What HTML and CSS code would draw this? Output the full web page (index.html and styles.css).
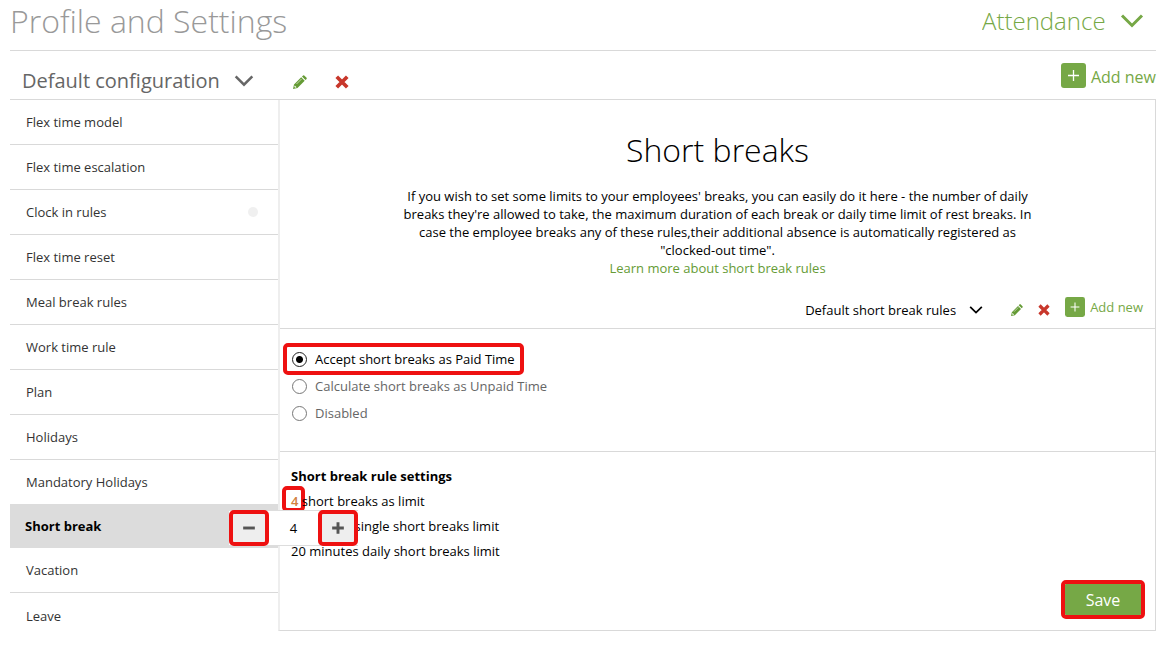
FILE: index.html
```html
<!DOCTYPE html>
<html lang="en">
<head>
  <meta charset="UTF-8">
  <meta name="viewport" content="width=device-width, initial-scale=1.0">
  <title>Profile and Settings</title>
  <link rel="stylesheet" href="styles.css">
</head>
<body>

  <!-- shared icons -->
  <svg class="sprite" aria-hidden="true">
    <symbol id="chevron" viewBox="0 0 24 16">
      <path d="M2 2.5 L12 12.5 L22 2.5" fill="none" stroke="currentColor" stroke-width="3"/>
    </symbol>
    <symbol id="pencil" viewBox="0 0 14 14">
      <path d="M0 14 L1 9.5 L8.200 2.300 L11.700 5.800 L4.500 13 Z M9 1.500 L10.100 .4 Q10.600 0 11.200 .4 L13.600 2.800 Q14 3.300 13.600 3.900 L12.500 5 Z" fill="currentColor"/>
      <path d="M1.700 10.400 L3.600 12.300 L2.200 12.700 L1.300 11.800 Z" fill="#fff"/>
      <path d="M3.500 9 L8.500 4" fill="none" stroke="#fff" stroke-width=".6"/>
    </symbol>
    <symbol id="cross" viewBox="0 0 12 12">
      <path d="M1.500 1.500 L10.500 10.500 M10.500 1.500 L1.500 10.500" stroke="currentColor" stroke-width="3.200"/>
    </symbol>
    <symbol id="add" viewBox="0 0 25 25">
      <rect width="25" height="25" rx="3" fill="currentColor"/>
      <path d="M12.500 7 V18 M7 12.500 H18" stroke="#fff" stroke-width="1.300"/>
    </symbol>
  </svg>

  <!-- Header -->
  <header class="page-header">
    <h1>Profile and Settings</h1>
    <div class="dropdown module">
      <select aria-label="Module">
        <option>Attendance</option>
      </select>
      <svg><use href="#chevron"/></svg>
    </div>
  </header>

  <!-- Configuration bar -->
  <div class="config-bar">
    <div class="dropdown config">
      <select aria-label="Configuration">
        <option>Default configuration</option>
      </select>
      <svg><use href="#chevron"/></svg>
    </div>
    <button type="button" class="icon edit" aria-label="Edit configuration"><svg><use href="#pencil"/></svg></button>
    <button type="button" class="icon delete" aria-label="Delete configuration"><svg><use href="#cross"/></svg></button>
    <button type="button" class="add-new"><svg><use href="#add"/></svg><span>Add new</span></button>
  </div>

  <div class="layout">
    <!-- Side menu -->
    <nav class="menu">
      <a href="#">Flex time model</a>
      <a href="#">Flex time escalation</a>
      <a href="#">Clock in rules <span class="dot"></span></a>
      <a href="#">Flex time reset</a>
      <a href="#">Meal break rules</a>
      <a href="#">Work time rule</a>
      <a href="#">Plan</a>
      <a href="#">Holidays</a>
      <a href="#">Mandatory Holidays</a>
      <a href="#" class="active">Short break</a>
      <a href="#">Vacation</a>
      <a href="#">Leave</a>
    </nav>

    <!-- Content -->
    <main class="content">
      <section class="intro">
        <h2>Short breaks</h2>
        <p>If you wish to set some limits to your employees' breaks, you can easily do it here - the number of daily breaks they're allowed to take, the maximum duration of each break or daily time limit of rest breaks. In case the employee breaks any of these rules,their additional absence is automatically registered as "clocked-out time".<br>
        <a href="#">Learn more about short break rules</a></p>
      </section>

      <div class="rules-bar">
        <div class="dropdown rules">
          <select aria-label="Short break rules">
            <option>Default short break rules</option>
          </select>
          <svg><use href="#chevron"/></svg>
        </div>
        <button type="button" class="icon edit" aria-label="Edit rules"><svg><use href="#pencil"/></svg></button>
        <button type="button" class="icon delete" aria-label="Delete rules"><svg><use href="#cross"/></svg></button>
        <button type="button" class="add-new"><svg><use href="#add"/></svg><span>Add new</span></button>
      </div>

      <form>
        <div class="options">
          <label class="marked"><input type="radio" name="mode" checked>Accept short breaks as Paid Time</label>
          <label><input type="radio" name="mode">Calculate short breaks as Unpaid Time</label>
          <label><input type="radio" name="mode">Disabled</label>
        </div>

        <div class="settings">
          <h3>Short break rule settings</h3>
          <div class="limit">
            <a href="#" class="value marked">4</a> short breaks as limit
            <div class="stepper">
              <button type="button" class="marked" aria-label="Less"><svg viewBox="0 0 12 12"><path d="M1 6 H11"/></svg></button>
              <input type="text" value="4" aria-label="Short breaks limit">
              <button type="button" class="marked" aria-label="More"><svg viewBox="0 0 12 12"><path d="M1 6 H11 M6 1 V11"/></svg></button>
            </div>
          </div>
          <div>5 minutes single short breaks limit</div>
          <div>20 minutes daily short breaks limit</div>
        </div>

        <div class="actions">
          <button type="submit" class="save marked">Save</button>
        </div>
      </form>
    </main>
  </div>

</body>
</html>
```
FILE: styles.css
```css
* {
  box-sizing: border-box;
}

body {
  margin: 0;
  padding: 0 11px 16px 10px;
  font-family: 'Open Sans', 'Noto Sans', sans-serif;
  font-size: 13px;
  line-height: 18px;
  color: #000;
  background: #fff;
}

h1, h2, h3, p {
  margin: 0;
}

a {
  color: #659b35;
  text-decoration: none;
}

button, input, select {
  font: inherit;
  color: inherit;
}

button {
  padding: 0;
  border: none;
  background: none;
  cursor: pointer;
}

.sprite {
  position: absolute;
  width: 0;
  height: 0;
}

/* red frame round the things to click */
.marked {
  outline: 4px solid #ee1111;
  border-radius: 1px;
}

.dropdown {
  display: flex;
  align-items: center;
}

.dropdown select {
  appearance: none;
  padding: 0;
  border: none;
  background: none;
  outline: none;
}

.dropdown svg {
  pointer-events: none;
}

/* Header */
.page-header {
  display: flex;
  justify-content: space-between;
  height: 51px;
  border-bottom: 1px solid #d9d9d9;
}

h1 {
  font-size: 32px;
  font-weight: 300;
  line-height: 42px;
  color: #999;
}

.module {
  height: 42px;
  margin-right: 12px;
  color: #76a846;
}

.module select {
  font-size: 24px;
  font-weight: 300;
  line-height: 34px;
}

.module svg {
  width: 24px;
  height: 16px;
  margin-left: 14px;
}

/* Configuration bar */
.config-bar {
  display: flex;
  align-items: center;
  height: 49px;
  padding-left: 12px;
  border-bottom: 1px solid #d9d9d9;
}

.config {
  margin-top: 12px;
  color: #666;
}

.config select {
  font-size: 20px;
  line-height: 28px;
}

.config svg {
  width: 20px;
  height: 14px;
  margin-left: 14px;
}

.icon svg {
  display: block;
  width: 14px;
  height: 14px;
}

.edit {
  color: #659b35;
}

.delete {
  color: #c8372b;
}

.config-bar .icon {
  margin: 14px 0 0 39px;
}

.config-bar .delete {
  margin-left: 28px;
}

.add-new {
  display: flex;
  align-items: center;
  gap: 5px;
  margin-left: auto;
  font-size: 16px;
  color: #76a846;
}

.add-new svg {
  width: 25px;
  height: 25px;
}

.config-bar .add-new span {
  padding-top: 3px;
}

/* Side menu */
.layout {
  display: grid;
  grid-template-columns: 268px 1fr;
}

.menu a {
  display: flex;
  align-items: center;
  justify-content: space-between;
  height: 45px;
  padding: 0 20px 0 16px;
  border-bottom: 1px solid #d9d9d9;
  color: #333;
}

.menu a:last-child {
  border-bottom: none;
}

.menu .active {
  height: 44px;
  margin-top: -1px;
  padding-left: 15px;
  border-bottom: none;
  background: #dcdcdc;
  font-weight: bold;
  color: #000;
}

.dot {
  width: 10px;
  height: 10px;
  border-radius: 50%;
  background: #f0f0f0;
}

/* Content */
.content {
  align-self: start;
  border: 1px solid #d9d9d9;
  border-width: 0 1px 1px 0;
  border-left: 2px solid #eee;
}

.intro {
  max-width: 640px;
  margin: 0 auto;
  padding-top: 28px;
  text-align: center;
}

h2 {
  margin-bottom: 15px;
  font-size: 32px;
  font-weight: 300;
  line-height: 44px;
}

.rules-bar {
  display: flex;
  align-items: center;
  justify-content: flex-end;
  height: 52px;
  padding: 14px 12px 0 0;
  border-bottom: 1px solid #d9d9d9;
}

.rules svg {
  width: 14px;
  height: 10px;
  margin-left: 13px;
}

.rules-bar .icon {
  margin-left: 28px;
}

.rules-bar .icon svg {
  width: 12px;
  height: 12px;
}

.rules-bar .delete {
  margin-left: 15px;
}

.rules-bar .add-new {
  margin: 0 0 6px 15px;
  font-size: 13px;
}

.rules-bar .add-new svg {
  width: 20px;
  height: 20px;
}

.options {
  display: flex;
  flex-direction: column;
  align-items: flex-start;
  gap: 3px;
  padding: 18px 7px 26px;
  border-bottom: 1px solid #d9d9d9;
}

.options label {
  display: flex;
  align-items: center;
  gap: 8px;
  height: 24px;
  padding: 0 5px;
  color: #666;
}

.options .marked {
  color: #000;
}

.options input {
  appearance: none;
  width: 15px;
  height: 15px;
  margin: 0;
  border: 1px solid #777;
  border-radius: 50%;
}

.options input:checked {
  border-color: #222;
  background: radial-gradient(circle, #000 3px, transparent 4px);
}

.settings {
  padding: 12px 11px 0;
  line-height: 25px;
}

h3 {
  font-size: 13px;
}

.limit {
  position: relative;
}

.value {
  display: inline-block;
  height: 18px;
  margin: 0 -3px 0 -5px;
  padding: 0 3px 0 5px;
  color: #d17f3f;
  font-weight: 600;
  line-height: 22px;
}

.stepper {
  position: absolute;
  top: 21px;
  left: -62px;
  z-index: 1;
  display: flex;
  height: 36px;
  padding: 4px;
  border: 1px solid #ddd;
  border-width: 1px 0;
  background: #fff;
}

.stepper button {
  display: grid;
  place-items: center;
  width: 32px;
  height: 28px;
  margin-top: -1px;
  background: #eee;
}

.stepper svg {
  width: 14px;
  height: 14px;
  fill: none;
  stroke: #555;
  stroke-width: 2.500;
}

.stepper input {
  width: 57px;
  padding: 0;
  border: none;
  background: none;
  font-size: 13px;
  text-align: center;
}

.actions {
  display: flex;
  justify-content: flex-end;
  padding: 20px 14px 15px;
}

.save {
  width: 76px;
  height: 31px;
  background: #76a846;
  font-size: 16px;
  color: #fff;
}
```
